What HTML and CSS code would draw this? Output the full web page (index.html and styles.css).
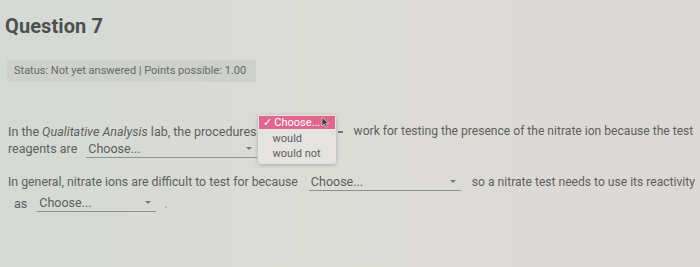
FILE: index.html
```html
<!DOCTYPE html>
<html>
<head>
<meta charset="utf-8">
<link rel="stylesheet" href="styles.css">
</head>
<body>
<div class="page">
  <h1 class="title">Question 7</h1>
  <div class="status">Status: Not yet answered | Points possible: 1.00</div>

  <div class="question">
    <div class="row row1">
      <span class="txt">In the <i>Qualitative Analysis</i> lab, the procedures</span>
      <span class="sel sel1">
        <span class="dash"></span>
        <div class="popup">
          <div class="opt active">✓ Choose...<svg class="cursor" width="9" height="11" viewBox="0 0 9 11"><path d="M1 0.5 L1 9 L3.2 7 L4.8 10.5 L6.2 9.8 L4.7 6.5 L7.8 6.4 Z" fill="#3a3a3a" stroke="#eee" stroke-width="0.6"/></svg></div>
          <div class="opt">would</div>
          <div class="opt">would not</div>
        </div>
      </span>
      <span class="txt t-right t-work">work for testing the presence of the nitrate ion because the test</span>
    </div>
    <div class="row row2">
      <span class="txt">reagents are</span>
      <span class="sel sel2"><span class="val">Choose...</span><span class="arrow"></span></span>
    </div>
    <div class="row row3">
      <span class="txt t-general">In general, nitrate ions are difficult to test for because</span>
      <span class="sel sel3"><span class="val">Choose...</span><span class="arrow"></span></span>
      <span class="txt t-right">so a nitrate test needs to use its reactivity</span>
    </div>
    <div class="row row4">
      <span class="txt t-as">as</span>
      <span class="sel sel4"><span class="val">Choose...</span><span class="arrow"></span></span>
      <span class="txt dot">.</span>
    </div>
  </div>
</div>
</body>
</html>
```
FILE: styles.css
```css
html, body {
  margin: 0;
  padding: 0;
}
body {
  width: 700px;
  height: 267px;
  overflow: hidden;
  font-family: Roboto, "Liberation Sans", sans-serif;
  background: linear-gradient(90deg, #d5d8d3 0%, #dcdcd7 45%, #dcd8d5 100%);
}
.page {
  padding: 14px 0 0 5px;
}
.title {
  margin: 0;
  font-size: 20px;
  font-weight: 700;
  line-height: 24px;
  color: #4a5052;
  letter-spacing: 0.1px;
}
.status {
  margin: 22px 0 0 2px;
  width: 242px;
  height: 22px;
  padding-left: 7px;
  line-height: 22px;
  font-size: 11px;
  color: #656a69;
  background: #cdd0cb;
}
.question {
  margin-top: 40px;
  padding-left: 3px;
  color: #5c5f60;
  font-size: 12.5px;
}
.row {
  display: flex;
  align-items: center;
  height: 18px;
}
.row2 { margin-top: -1px; }
.row3 { margin-top: 16px; }
.row4 { margin-top: 3px; }
.txt { white-space: nowrap; }
.t-right { font-size: 12.1px; }
.t-general { font-size: 12.3px; }
.sel {
  position: relative;
  display: flex;
  align-items: center;
  height: 18px;
  border-bottom: 1px solid #8e918f;
  box-sizing: border-box;
}
.val { padding-left: 2px; color: #5a5e5f; }
.arrow {
  margin-left: auto;
  margin-right: 5px;
  width: 0;
  height: 0;
  border-left: 3px solid transparent;
  border-right: 3px solid transparent;
  border-top: 3px solid #777a79;
}
.sel1 {
  width: 86px;
  margin-left: 1px;
  border-bottom: none;
}
.dash {
  position: absolute;
  right: 1px;
  top: 9px;
  width: 5px;
  height: 2px;
  background: #6e7170;
}
.popup {
  position: absolute;
  left: 0;
  top: -7px;
  width: 78px;
  padding: 1px 0 3px;
  background: #e4e3e0;
  border-radius: 3px;
  box-shadow: 0 1px 4px rgba(0,0,0,0.22);
  font-size: 11px;
  color: #5d5f60;
}
.opt {
  height: 15px;
  line-height: 15px;
  padding-left: 15px;
}
.opt.active {
  margin: 0 1px;
  padding-left: 4px;
  height: 13px;
  line-height: 13px;
  background: #e0668f;
  color: #fff;
  display: flex;
  align-items: center;
}
.opt.active + .opt { margin-top: 2px; }
.cursor { margin-left: 1px; }
.t-work { margin-left: 10px; }
.sel2 { width: 171px; margin-left: 9px; }
.row2 .sel { margin-top: 2px; }
.sel3 { width: 152px; margin-left: 11px; margin-right: 11px; }
.t-as { margin-left: 6px; }
.sel4 { width: 119px; margin-left: 10px; }
.dot { margin-left: 8px; color: #8a8c8a; }
```
